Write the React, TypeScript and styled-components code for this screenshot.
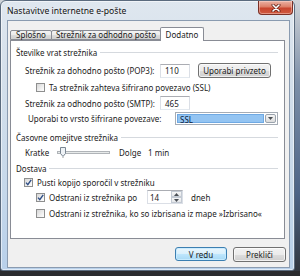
import React from 'react';
import styled, { createGlobalStyle } from 'styled-components';

const GlobalStyle = createGlobalStyle`
  html, body { margin: 0; padding: 0; }
  body {
    background: #3a4250;
    font-family: "Noto Sans", "Open Sans", sans-serif;
    color: #1b1b1b;
  }
`;

const Desktop = styled.div`
  width: 300px;
  height: 276px;
  overflow: hidden;
  display: flex;
  flex-direction: column;
  background: linear-gradient(180deg, #cfd3d8 0%, #7c8fa8 30%, #4d6486 70%, #30343b 100%);
`;

const Window = styled.div`
  width: 295px;
  height: 271px;
  flex: none;
  box-sizing: border-box;
  display: flex;
  flex-direction: column;
  border: 1px solid #5b6b7e;
  border-radius: 6px 6px 3px 3px;
  box-shadow: inset 0 0 0 1px rgba(255, 255, 255, 0.55);
  background: linear-gradient(180deg, #dfe7ef 0%, #d5e0eb 25%, #c6d8ea 70%, #b8d0ea 100%);
`;

const BottomStrip = styled.div`
  flex: 1;
  background: #2a2b2e;
`;

const TitleBar = styled.div`
  height: 19px;
  flex: none;
  display: flex;
  align-items: flex-start;
  padding-left: 6px;
`;

const Title = styled.span`
  font-size: 8.6px;
  line-height: 9px;
  margin-top: 6px;
  color: #101010;
  text-shadow: 0 0 4px rgba(255, 255, 255, 0.9);
  white-space: nowrap;
`;

const CloseButton = styled.div`
  margin-left: auto;
  margin-right: 1px;
  margin-top: 0;
  width: 35px;
  height: 14px;
  box-sizing: border-box;
  border: 1px solid #7a3026;
  border-top: none;
  border-radius: 0 0 4px 4px;
  background: linear-gradient(180deg, #eab2a4 0%, #dd7f68 45%, #c8452e 55%, #cf5a40 100%);
  box-shadow: inset 0 0 0 1px rgba(255, 220, 210, 0.45);
  display: flex;
  align-items: center;
  justify-content: center;
`;

const Client = styled.div`
  flex: 1;
  margin: 0 4px 3px 6px;
  border: 1px solid #8a9bb0;
  background: #f0f0f0;
  padding: 6px 4px 5px 2px;
  display: flex;
  flex-direction: column;
`;

const TabStrip = styled.div`
  height: 13px;
  display: flex;
  align-items: flex-end;
  position: relative;
  z-index: 1;
`;

const Tab = styled.div<{ $active?: boolean; $width: number }>`
  width: ${(p) => p.$width}px;
  height: ${(p) => (p.$active ? 14 : 10)}px;
  margin-bottom: ${(p) => (p.$active ? -1 : 0)}px;
  margin-left: -1px;
  box-sizing: border-box;
  border: 1px solid #898c95;
  border-bottom: ${(p) => (p.$active ? 'none' : '1px solid #898c95')};
  border-radius: 2px 2px 0 0;
  background: ${(p) =>
    p.$active ? '#ffffff' : 'linear-gradient(180deg, #f3f3f3 0%, #ebebeb 50%, #dddddd 51%, #cfcfcf 100%)'};
  font-size: 8px;
  line-height: 8px;
  display: flex;
  align-items: center;
  justify-content: center;
  white-space: nowrap;
  padding-top: ${(p) => (p.$active ? 0 : 0)}px;
  &:first-child { margin-left: 0; }
`;

const Panel = styled.div`
  height: 199px;
  box-sizing: border-box;
  border: 1px solid #898c95;
  background: #ffffff;
  padding: 5px 6px 0 5px;
  display: flex;
  flex-direction: column;
`;

const Row = styled.div<{ $top: number; $h: number; $indent?: number }>`
  margin-top: ${(p) => p.$top}px;
  height: ${(p) => p.$h}px;
  padding-left: ${(p) => p.$indent || 0}px;
  display: flex;
  align-items: center;
  font-size: 8px;
  white-space: nowrap;
`;

const GroupRow = styled(Row)`
  gap: 3px;
`;

const GroupLine = styled.div`
  flex: 1;
  height: 1px;
  background: #d5d9de;
  box-shadow: 0 1px 0 #ffffff;
`;

const Label = styled.span<{ $width?: number }>`
  width: ${(p) => (p.$width ? `${p.$width}px` : 'auto')};
  flex: none;
  font-size: 8px;
`;

const TextInput = styled.div<{ $width: number }>`
  width: ${(p) => p.$width}px;
  height: 14px;
  box-sizing: border-box;
  border: 1px solid #dbdfe6;
  border-top-color: #abadb3;
  border-bottom-color: #e3e9ef;
  background: #ffffff;
  padding-left: 4px;
  display: flex;
  align-items: center;
  font-size: 8px;
`;

const Button = styled.div<{ $width: number; $primary?: boolean }>`
  width: ${(p) => p.$width}px;
  height: ${(p) => (p.$primary ? 14 : 15)}px;
  box-sizing: border-box;
  border: 1px solid ${(p) => (p.$primary ? '#3c7fb1' : '#707070')};
  border-radius: 3px;
  background: ${(p) =>
    p.$primary
      ? 'linear-gradient(180deg, #eaf6fd 0%, #d9f0fc 50%, #bee6fd 51%, #a7d9f5 100%)'
      : 'linear-gradient(180deg, #f2f2f2 0%, #ebebeb 50%, #dddddd 51%, #cfcfcf 100%)'};
  box-shadow: inset 0 0 0 1px ${(p) => (p.$primary ? 'rgba(200,235,255,0.9)' : 'rgba(255,255,255,0.7)')};
  display: flex;
  align-items: center;
  justify-content: center;
  font-size: 8px;
  flex: none;
`;

const BoxOuter = styled.span`
  width: 9px;
  height: 9px;
  flex: none;
  box-sizing: border-box;
  border: 1px solid #8e8f8f;
  background: linear-gradient(135deg, #d6d6d6 0%, #f4f4f4 70%, #ffffff 100%);
  display: flex;
  align-items: center;
  justify-content: center;
  margin-right: 4px;
`;

const CheckBox = ({ checked }: { checked?: boolean }) => (
  <BoxOuter>
    {checked && (
      <svg width="7" height="7" viewBox="0 0 7 7">
        <path d="M1 3.6 L2.8 5.6 L6.2 0.8" fill="none" stroke="#2e4e86" strokeWidth="1.4" />
      </svg>
    )}
  </BoxOuter>
);

const Select = styled.div`
  width: 103px;
  height: 13px;
  box-sizing: border-box;
  border: 1px solid #a5acb5;
  background: #ffffff;
  padding: 1px;
  display: flex;
`;

const SelectValue = styled.div`
  flex: 1;
  background: #93c4f2;
  border: 1px solid #6fa9e3;
  padding-left: 2px;
  font-size: 8px;
  line-height: 9px;
  color: #0c1c3c;
`;

const DropButton = styled.div`
  width: 11px;
  margin-left: 1px;
  box-sizing: border-box;
  border: 1px solid #9aa3ad;
  border-radius: 2px;
  background: linear-gradient(180deg, #f5f5f5 0%, #dcdcdc 100%);
  display: flex;
  align-items: center;
  justify-content: center;
`;

const Spinner = styled.div`
  width: 36px;
  height: 14px;
  box-sizing: border-box;
  border: 1px solid #dbdfe6;
  border-top-color: #abadb3;
  background: #ffffff;
  display: flex;
  margin-right: 8px;
`;

const SpinValue = styled.div`
  flex: 1;
  padding-left: 2px;
  font-size: 8px;
  display: flex;
  align-items: center;
`;

const SpinButtons = styled.div`
  width: 11px;
  display: flex;
  flex-direction: column;
`;

const SpinHalf = styled.div`
  flex: 1;
  box-sizing: border-box;
  border: 1px solid #c3cad3;
  background: linear-gradient(180deg, #f7f7f7 0%, #e4e6e9 100%);
  display: flex;
  align-items: center;
  justify-content: center;
`;

const ButtonRow = styled.div`
  margin-top: 8px;
  display: flex;
  justify-content: flex-end;
  gap: 6px;
  margin-right: -1px;
`;

const Slider = () => (
  <svg width="53" height="12" viewBox="0 0 53 12">
    <rect x="0.5" y="5.5" width="52" height="2" fill="#e7eaea" stroke="#b0b4b8" strokeWidth="1" />
    <path d="M3.5 1.5 H8.5 V7.5 L6 10.5 L3.5 7.5 Z" fill="#eef2f6" stroke="#7b8793" strokeWidth="1" />
    <line x1="6" y1="11" x2="6" y2="12" stroke="#a0a0a0" />
  </svg>
);

const Arrow = ({ up }: { up?: boolean }) => (
  <svg width="5" height="3" viewBox="0 0 5 3">
    <path d={up ? 'M0 3 L2.5 0 L5 3 Z' : 'M0 0 L5 0 L2.5 3 Z'} fill="#4a4f55" />
  </svg>
);

export default function App() {
  return (
    <Desktop>
      <GlobalStyle />
      <Window>
        <TitleBar>
          <Title>Nastavitve internetne e-pošte</Title>
          <CloseButton>
            <svg width="10" height="8" viewBox="0 0 10 8">
              <path d="M2 1 L8 7 M8 1 L2 7" stroke="#5a1a12" strokeWidth="3" strokeLinecap="round" />
              <path d="M2 1 L8 7 M8 1 L2 7" stroke="#ffffff" strokeWidth="1.6" strokeLinecap="round" />
            </svg>
          </CloseButton>
        </TitleBar>
        <Client>
          <TabStrip>
            <Tab $width={42}>Splošno</Tab>
            <Tab $width={110}>Strežnik za odhodno pošto</Tab>
            <Tab $width={44} $active>Dodatno</Tab>
          </TabStrip>
          <Panel>
            <GroupRow $top={0} $h={12}>
              <span>Številke vrat strežnika</span>
              <GroupLine />
            </GroupRow>
            <Row $top={5} $h={15} $indent={9}>
              <Label $width={135}>Strežnik za dohodno pošto (POP3):</Label>
              <TextInput $width={30}>110</TextInput>
              <Button $width={73} style={{ marginLeft: 8 }}>Uporabi privzeto</Button>
            </Row>
            <Row $top={4} $h={10} $indent={20}>
              <CheckBox />
              <Label>Ta strežnik zahteva šifrirano povezavo (SSL)</Label>
            </Row>
            <Row $top={4} $h={14} $indent={9}>
              <Label $width={135}>Strežnik za odhodno pošto (SMTP):</Label>
              <TextInput $width={30}>465</TextInput>
            </Row>
            <Row $top={2} $h={13} $indent={12}>
              <Label $width={147}>Uporabi to vrsto šifrirane povezave:</Label>
              <Select>
                <SelectValue>SSL</SelectValue>
                <DropButton>
                  <Arrow />
                </DropButton>
              </Select>
            </Row>
            <GroupRow $top={6} $h={12}>
              <span>Časovne omejitve strežnika</span>
              <GroupLine />
            </GroupRow>
            <Row $top={3} $h={12} $indent={9}>
              <Label $width={32}>Kratke</Label>
              <Slider />
              <Label $width={29} style={{ marginLeft: 9 }}>Dolge</Label>
              <Label>1 min</Label>
            </Row>
            <GroupRow $top={4} $h={12}>
              <span>Dostava</span>
              <GroupLine />
            </GroupRow>
            <Row $top={3} $h={10} $indent={8}>
              <CheckBox checked />
              <Label>Pusti kopijo sporočil v strežniku</Label>
            </Row>
            <Row $top={3} $h={14} $indent={20}>
              <CheckBox checked />
              <Label $width={98}>Odstrani iz strežnika po</Label>
              <Spinner>
                <SpinValue>14</SpinValue>
                <SpinButtons>
                  <SpinHalf>
                    <Arrow up />
                  </SpinHalf>
                  <SpinHalf>
                    <Arrow />
                  </SpinHalf>
                </SpinButtons>
              </Spinner>
              <Label>dneh</Label>
            </Row>
            <Row $top={4} $h={10} $indent={20}>
              <CheckBox />
              <Label>Odstrani iz strežnika, ko so izbrisana iz mape »Izbrisano«</Label>
            </Row>
          </Panel>
          <ButtonRow>
            <Button $width={52} $primary>V redu</Button>
            <Button $width={53}>Prekliči</Button>
          </ButtonRow>
        </Client>
      </Window>
      <BottomStrip />
    </Desktop>
  );
}
